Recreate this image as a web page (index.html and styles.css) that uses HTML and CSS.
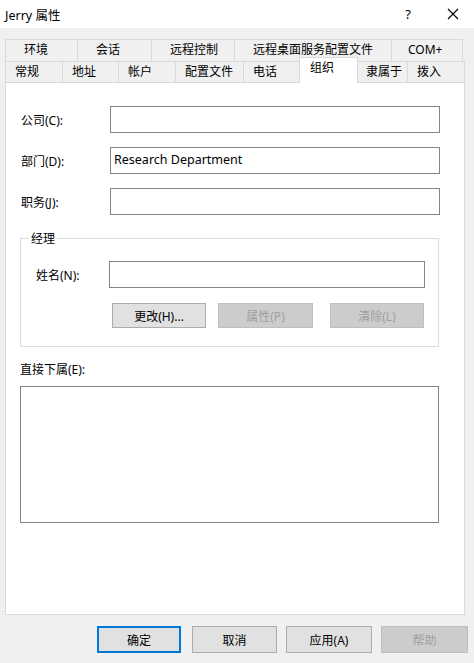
FILE: index.html
```html
<!DOCTYPE html>
<html>
<head>
    <title>Jerry 属性</title>
    <link rel="stylesheet" href="styles.css">
</head>
<body>
    <!-- Title bar -->
    <div class="titlebar">
        <span class="title">Jerry 属性</span>
        <span class="help">?</span>
        <svg class="close" width="12" height="12" viewBox="0 0 12 12">
            <path d="M1 1 L11 11 M11 1 L1 11" stroke="#000" stroke-width="1.1" fill="none"/>
        </svg>
    </div>

    <div class="dialog">
        <!-- Tabs -->
        <div class="tabs">
            <div class="tab-row row1">
                <div class="tab">环境</div>
                <div class="tab">会话</div>
                <div class="tab">远程控制</div>
                <div class="tab">远程桌面服务配置文件</div>
                <div class="tab last">COM+</div>
            </div>
            <div class="tab-row row2">
                <div class="tab">常规</div>
                <div class="tab">地址</div>
                <div class="tab">帐户</div>
                <div class="tab">配置文件</div>
                <div class="tab">电话</div>
                <div class="tab active">组织</div>
                <div class="tab">隶属于</div>
                <div class="tab last">拨入</div>
            </div>
        </div>

        <!-- Tab page -->
        <div class="panel">
            <div class="field first">
                <label class="field-label">公司(C):</label>
                <div class="textbox"></div>
            </div>
            <div class="field">
                <label class="field-label">部门(D):</label>
                <div class="textbox">Research Department</div>
            </div>
            <div class="field">
                <label class="field-label">职务(J):</label>
                <div class="textbox"></div>
            </div>

            <!-- Manager group -->
            <div class="group">
                <span class="group-title">经理</span>
                <div class="group-field">
                    <label class="group-label">姓名(N):</label>
                    <div class="textbox narrow"></div>
                </div>
                <div class="group-buttons">
                    <button class="btn change">更改(H)...</button>
                    <button class="btn disabled props">属性(P)</button>
                    <button class="btn disabled clear">清除(L)</button>
                </div>
            </div>

            <div class="reports-label">直接下属(E):</div>
            <div class="listbox"></div>
        </div>

        <!-- Dialog buttons -->
        <div class="footer">
            <button class="btn ok">确定</button>
            <button class="btn cancel">取消</button>
            <button class="btn apply">应用(A)</button>
            <button class="btn disabled helpbtn">帮助</button>
        </div>
    </div>
</body>
</html>
```

FILE: styles.css
```css
/* Base */
body {
    margin: 0;
    background-color: #f0f0f0;
    font-family: "Noto Sans", "Noto Sans CJK SC", sans-serif;
    font-size: 12px;
    color: #000;
}

/* Title bar */
.titlebar {
    height: 28px;
    background-color: #fff;
    display: flex;
    align-items: center;
    padding-left: 5px;
}

.title {
    font-size: 12.5px;
}

.help {
    margin-left: auto;
    font-size: 13px;
}

.close {
    margin-left: 36px;
    margin-right: 15px;
}

/* Dialog body */
.dialog {
    padding: 11px 0 0 5px;
}

/* Tabs */
.tab-row {
    display: grid;
    width: 460px;
}

.row1 {
    grid-template-columns: 72px 74px 83px 157px 72px;
    height: 22px;
}

.row2 {
    grid-template-columns: 57px 56px 57px 68px 56px 58px 50px 58px;
    height: 21px;
}

.tab {
    box-sizing: border-box;
    border-top: 1px solid #d9d9d9;
    border-left: 1px solid #d9d9d9;
    background-color: #f0f0f0;
    line-height: 20px;
    white-space: nowrap;
}

.tab.last {
    border-right: 1px solid #d9d9d9;
}

.row1 .tab {
    padding-left: 18px;
}

.row1 .tab.last {
    padding-left: 16px;
}

.row2 .tab {
    padding-left: 9px;
}

.row2 .tab.active {
    position: relative;
    z-index: 1;
    height: 26px;
    margin-top: -4px;
    margin-bottom: -1px;
    padding-left: 10px;
    background-color: #fff;
    border-right: 1px solid #d9d9d9;
    margin-right: -1px;
}

.row2 .tab.active + .tab {
    border-left: none;
}

/* Tab page */
.panel {
    box-sizing: border-box;
    width: 460px;
    height: 533px;
    background-color: #fff;
    border: 1px solid #d9d9d9;
    padding: 23px 0 0 14px;
}

.field {
    display: flex;
    align-items: center;
    margin-top: 14px;
}

.field.first {
    margin-top: 0;
}

.field-label {
    width: 89px;
    padding-left: 1px;
}

.textbox {
    box-sizing: border-box;
    width: 330px;
    height: 27px;
    border: 1px solid #858585;
    background-color: #fff;
    padding: 4px 3px;
    font-size: 12.5px;
    line-height: 16px;
}

.textbox.narrow {
    width: 316px;
}

/* Manager group box */
.group {
    box-sizing: border-box;
    width: 419px;
    height: 109px;
    margin-top: 23px;
    border: 1px solid #dcdcdc;
    padding-left: 15px;
}

.group-title {
    display: block;
    width: fit-content;
    margin: -9px 0 0 -7px;
    padding: 0 2px;
    background-color: #fff;
    line-height: 17px;
}

.group-field {
    display: flex;
    align-items: center;
    margin-top: 14px;
}

.group-label {
    width: 73px;
}

.group-buttons {
    display: flex;
    margin-top: 15px;
    padding-left: 76px;
}

/* Buttons */
.btn {
    box-sizing: border-box;
    height: 25px;
    border: 1px solid #adadad;
    background-color: #e1e1e1;
    font-family: "Noto Sans", "Noto Sans CJK SC", sans-serif;
    font-size: 12px;
    color: #000;
    padding: 0;
}

.btn.disabled {
    background-color: #cccccc;
    border-color: #bfbfbf;
    color: #a0a0a0;
}

.change {
    width: 94px;
}

.props {
    width: 95px;
    margin-left: 12px;
}

.clear {
    width: 94px;
    margin-left: 17px;
}

/* Direct reports */
.reports-label {
    margin-top: 14px;
    line-height: 17px;
}

.listbox {
    box-sizing: border-box;
    width: 419px;
    height: 137px;
    margin-top: 8px;
    border: 1px solid #858585;
    background-color: #fff;
}

/* Footer buttons */
.footer {
    display: flex;
    margin-top: 11px;
    padding-left: 92px;
}

.footer .btn {
    height: 27px;
}

.ok {
    width: 84px;
    border: 2px solid #0078d7;
}

.cancel {
    width: 85px;
    margin-left: 11px;
}

.apply {
    width: 86px;
    margin-left: 9px;
}

.helpbtn {
    width: 87px;
    margin-left: 9px;
}
```
